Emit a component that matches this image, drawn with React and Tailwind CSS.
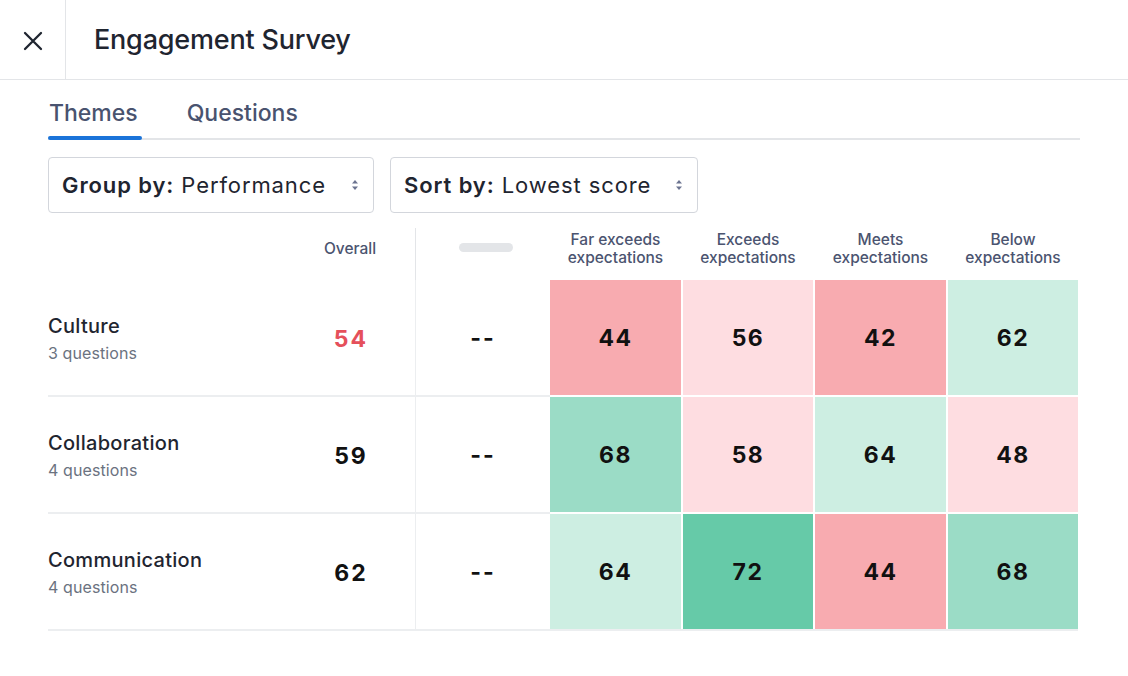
import React from "react";

const cols = ["Far exceeds expectations", "Exceeds expectations", "Meets expectations", "Below expectations"];
const C = {
  dp: "bg-[#f8abb0]",
  lp: "bg-[#fedde1]",
  lg: "bg-[#cdeee2]",
  mg: "bg-[#9bdcc6]",
  dg: "bg-[#66caa8]",
};
const rows = [
  { name: "Culture", q: "3 questions", overall: "54", red: true, cells: [["44", C.dp], ["56", C.lp], ["42", C.dp], ["62", C.lg]] },
  { name: "Collaboration", q: "4 questions", overall: "59", cells: [["68", C.mg], ["58", C.lp], ["64", C.lg], ["48", C.lp]] },
  { name: "Communication", q: "4 questions", overall: "62", cells: [["64", C.lg], ["72", C.dg], ["44", C.dp], ["68", C.mg]] },
];
const widths = ["w-[131px]", "w-[130px]", "w-[131px]", "w-[130px]"];

function Chevrons() {
  return (
    <svg width="8" height="14" viewBox="0 0 8 14" className="text-[#6b7390]">
      <path d="M4 2 L7 5.5 H1 Z" fill="currentColor" />
      <path d="M4 12 L7 8.5 H1 Z" fill="currentColor" />
    </svg>
  );
}

export default function App() {
  return (
    <div className="w-[1128px] h-[676px] bg-white overflow-hidden" style={{ fontFamily: "Inter, 'Noto Sans', sans-serif" }}>
      {/* Header */}
      <div className="flex h-[80px] border-b border-[#e3e5e8]">
        <div className="w-[66px] flex items-center justify-center border-r border-[#e3e5e8]">
          <svg width="20" height="20" viewBox="0 0 20 20" className="ml-[1px] mt-[2px]">
            <path d="M2 2 L18 18 M18 2 L2 18" stroke="#1f2530" strokeWidth="2.3" strokeLinecap="round" />
          </svg>
        </div>
        <div className="flex items-center pl-[28px] pt-[2px] text-[27px] font-medium text-[#1f2530] tracking-[-0.2px]">Engagement Survey</div>
      </div>

      <div className="px-[48px]">
        {/* Tabs */}
        <div className="flex w-[1032px] border-b-2 border-[#e3e5e8] h-[60px] items-end">
          <div className="mr-[45px] relative pb-[13px] pr-[4px] text-[23px] font-medium text-[#49536f] leading-none px-[1px]">
            Themes
            <div className="absolute left-0 right-0 -bottom-[2px] h-[4px] bg-[#1a73d9] rounded-sm" />
          </div>
          <div className="pb-[13px] text-[23px] font-medium text-[#49536f] leading-none">Questions</div>
        </div>

        {/* Selects */}
        <div className="flex gap-[16px] mt-[17px]">
          <div className="w-[326px] h-[56px] rounded-[4px] border border-[#d3d6dc] flex items-center justify-between pl-[13px] pr-[14px] text-[22px] tracking-[0.9px] text-[#1f2530]">
            <span><span className="font-semibold">Group by:</span> Performance</span>
            <Chevrons />
          </div>
          <div className="w-[308px] h-[56px] rounded-[4px] border border-[#d3d6dc] flex items-center justify-between pl-[13px] pr-[14px] text-[22px] tracking-[0.9px] text-[#1f2530]">
            <span><span className="font-semibold">Sort by:</span> Lowest score</span>
            <Chevrons />
          </div>
        </div>

        {/* Table */}
        <div className="mt-[15px] w-[1032px]">
          {/* Header row */}
          <div className="flex h-[52px]">
            <div className="w-[237px]" />
            <div className="w-[131px] border-r border-[#e3e5e8] flex justify-center pt-[9px] text-[15.5px] font-medium text-[#4b5470]">Overall</div>
            <div className="w-[134px] flex justify-center pt-[15px]">
              <div className="ml-[6px] w-[54px] h-[9px] rounded-full bg-[#e3e5e8]" />
            </div>
            <div className="flex gap-[2px]">
              {cols.map((c, i) => (
                <div key={c} className={`${widths[i]} flex flex-col items-center pt-[3px] text-[15.5px] leading-[18px] font-medium text-[#4b5470] text-center`}>
                  <span>{c.split(" ").slice(0, -1).join(" ")}</span>
                  <span>expectations</span>
                </div>
              ))}
            </div>
          </div>

          {rows.map((r, ri) => (
            <div key={r.name} className="flex h-[117px]">
              <div className="w-[237px] border-b-2 border-[#eceef0] flex flex-col justify-center pt-[2px]">
                <div className="text-[20px] font-medium text-[#1f2530] leading-[26px] tracking-[0.3px]">{r.name}</div>
                <div className="text-[16px] text-[#6b7280] leading-[22px] mt-[3px] tracking-[0.1px]">{r.q}</div>
              </div>
              <div className={`w-[131px] border-r border-b-2 border-[#eceef0] flex items-center justify-center pt-[3px] pl-[2px] text-[23px] font-bold tracking-[2px] ${r.red ? "text-[#e5505b]" : "text-[#111]"}`}>
                {r.overall}
              </div>
              <div className="w-[134px] border-b-2 border-[#eceef0] flex items-center justify-center pt-[2px] text-[23px] font-bold tracking-[2px] text-[#111]">--</div>
              <div className={`flex gap-[2px] ${ri === 2 ? "border-b-2 border-[#eceef0]" : "border-b-2 border-white"}`}>
                {r.cells.map(([v, bg], i) => (
                  <div key={i} className={`${widths[i]} ${bg} flex items-center justify-center pt-[2px] text-[23px] font-bold tracking-[1.5px] text-[#111]`}>
                    {v}
                  </div>
                ))}
              </div>
            </div>
          ))}
        </div>
      </div>
    </div>
  );
}
